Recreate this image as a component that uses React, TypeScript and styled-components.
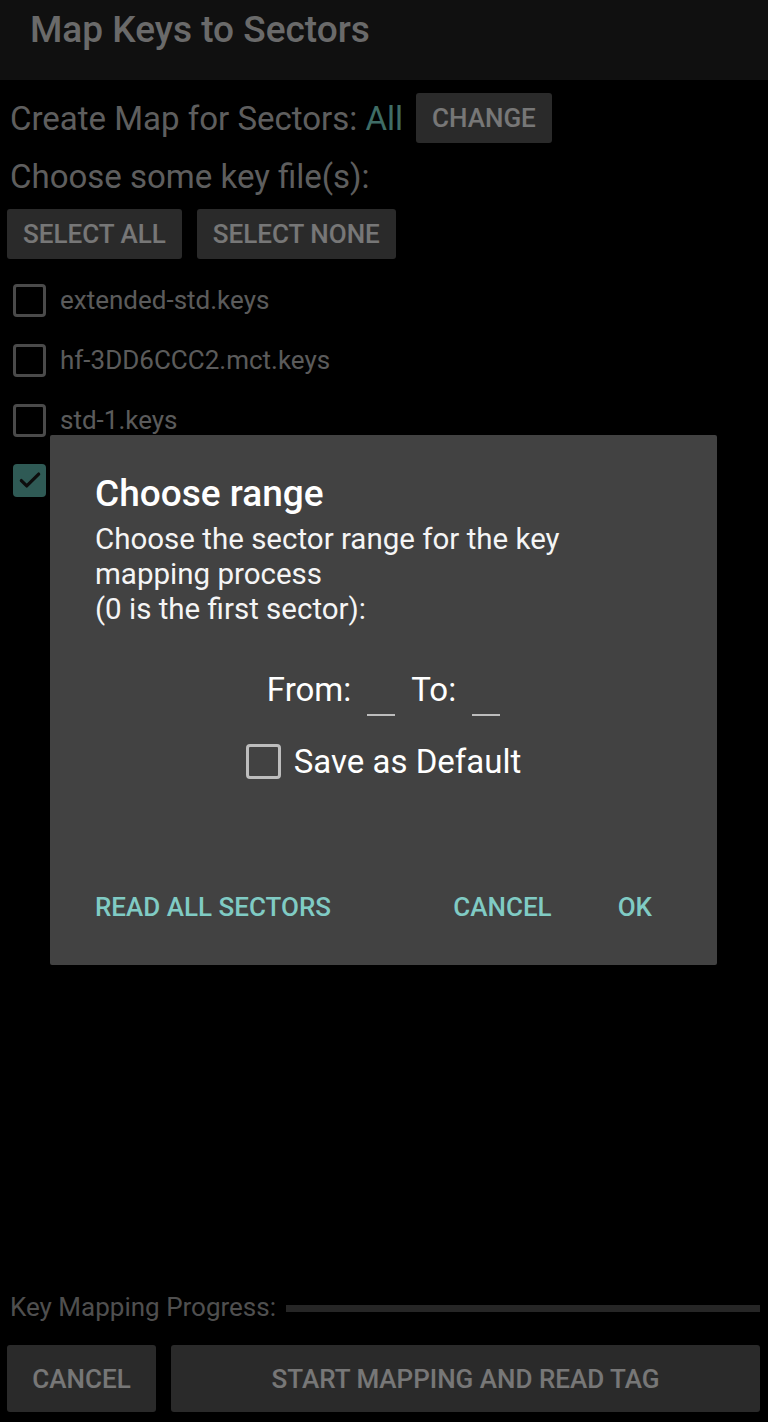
import * as React from "react";
import styled, { createGlobalStyle } from "styled-components";

const Global = createGlobalStyle`
    html, body {
        margin: 0;
        padding: 0;
        background: #000;
    }
    body {
        font-family: Roboto, "Noto Sans", sans-serif;
    }
`;

const Screen = styled.div`
    position: relative;
    width: 768px;
    height: 1422px;
    display: flex;
    flex-direction: column;
    background: #000;
    overflow: hidden;
`;

const TitleBar = styled.div`
    height: 80px;
    box-sizing: border-box;
    padding: 10px 0 0 30px;
    background: #202020;
    color: #d4d4d4;
    font-size: 37px;
    font-weight: 500;
    line-height: 40px;
`;

const Content = styled.div`
    flex: 1;
    display: flex;
    flex-direction: column;
    padding: 13px 8px 10px 7px;
`;

const Line = styled.div<{ h: number }>`
    display: flex;
    align-items: center;
    gap: 13px;
    padding-left: 3px;
    color: #bcbcbc;
    font-size: 33px;
    height: ${({ h }) => h}px;
`;

const Accent = styled.span`
    color: #7edacc;
`;

const Button = styled.div<{ w?: string; h: number; grow?: boolean }>`
    display: flex;
    align-items: center;
    justify-content: center;
    height: ${({ h }) => h}px;
    padding: 0 16px;
    width: ${({ w }) => w || "auto"};
    flex: ${({ grow }) => (grow ? 1 : "none")};
    box-sizing: border-box;
    background: #545454;
    border-radius: 3px;
    color: #eeeeee;
    font-size: 26px;
    font-weight: 500;
    text-transform: uppercase;
`;

const ButtonRow = styled.div`
    display: flex;
    gap: 15px;
`;

const FileList = styled.div`
    display: flex;
    flex-direction: column;
    margin-top: 11px;
`;

const FileRow = styled.div`
    display: flex;
    align-items: center;
    gap: 14px;
    height: 60px;
    padding-left: 6px;
    color: #b6b6b6;
    font-size: 26px;
`;

const Box = styled.div<{ checked?: boolean; size?: number; tone?: string }>`
    width: ${({ size }) => size || 33}px;
    height: ${({ size }) => size || 33}px;
    box-sizing: border-box;
    border-radius: 4px;
    border: ${({ checked, tone }) => (checked ? "none" : `3px solid ${tone || "#949494"}`)};
    background: ${({ checked }) => (checked ? "#5fb5aa" : "transparent")};
    display: flex;
    align-items: center;
    justify-content: center;
`;

const Spacer = styled.div`
    flex: 1;
`;

const Progress = styled.div`
    display: flex;
    align-items: center;
    gap: 10px;
    padding-left: 3px;
    color: #9e9e9e;
    font-size: 26px;
    height: 36px;
`;

const Track = styled.div`
    flex: 1;
    height: 7px;
    background: #4c4c4c;
    margin-top: 2px;
`;

const BottomRow = styled.div`
    display: flex;
    gap: 15px;
    margin-top: 20px;
`;

const Scrim = styled.div`
    position: absolute;
    inset: 0;
    background: rgba(0, 0, 0, 0.5);
`;

const Dialog = styled.div`
    position: absolute;
    left: 50px;
    top: 435px;
    width: 667px;
    height: 530px;
    box-sizing: border-box;
    padding: 34px 45px 34px 45px;
    background: #424242;
    border-radius: 2px;
    display: flex;
    flex-direction: column;
    color: #ffffff;
`;

const DialogTitle = styled.div`
    font-size: 37px;
    font-weight: 500;
    line-height: 50px;
`;

const DialogText = styled.div`
    font-size: 29.5px;
    line-height: 35px;
    margin-top: 3px;
    color: #f5f5f5;
`;

const RangeRow = styled.div`
    display: flex;
    align-items: center;
    justify-content: center;
    gap: 16px;
    margin-top: 37px;
    height: 50px;
    font-size: 33px;
`;

const Field = styled.div`
    width: 28px;
    height: 26px;
    margin-top: 26px;
    border-bottom: 2px solid #bdbdbd;
`;

const SaveRow = styled.div`
    display: flex;
    align-items: center;
    justify-content: center;
    gap: 13px;
    height: 50px;
    margin-top: 22px;
    font-size: 33px;
`;

const Actions = styled.div`
    margin-top: auto;
    display: flex;
    align-items: center;
    justify-content: space-between;
    height: 48px;
    padding-right: 20px;
`;

const ActionGroup = styled.div`
    display: flex;
    gap: 66px;
`;

const Action = styled.div`
    color: #80cbc4;
    font-size: 26px;
    font-weight: 500;
    text-transform: uppercase;
`;

const Check = () => (
    <svg width="26" height="26" viewBox="0 0 24 24">
        <path
            d="M4 12.5l5 5L20 6.5"
            fill="none"
            stroke="#1a1a1a"
            strokeWidth="3"
            strokeLinecap="round"
            strokeLinejoin="round"
        />
    </svg>
);

// the last file row sits under the dialog, only its box shows
const files = [
    { name: "extended-std.keys", checked: false },
    { name: "hf-3DD6CCC2.mct.keys", checked: false },
    { name: "std-1.keys", checked: false },
    { name: "", checked: true },
];

export default function App() {
    return (
        <Screen>
            <Global />
            <TitleBar>Map Keys to Sectors</TitleBar>
            <Content>
                <Line h={50}>
                    <span>
                        Create Map for Sectors: <Accent>All</Accent>
                    </span>
                    <Button h={50}>Change</Button>
                </Line>
                <Line h={66}>Choose some key file(s):</Line>
                <ButtonRow>
                    <Button h={50}>Select All</Button>
                    <Button h={50}>Select None</Button>
                </ButtonRow>
                <FileList>
                    {files.map((f, i) => (
                        <FileRow key={i}>
                            <Box checked={f.checked}>{f.checked && <Check />}</Box>
                            {f.name}
                        </FileRow>
                    ))}
                </FileList>
                <Spacer />
                <Progress>
                    Key Mapping Progress:
                    <Track />
                </Progress>
                <BottomRow>
                    <Button h={67} w="149px">Cancel</Button>
                    <Button h={67} grow>Start Mapping and Read Tag</Button>
                </BottomRow>
            </Content>
            <Scrim />
            <Dialog>
                <DialogTitle>Choose range</DialogTitle>
                <DialogText>
                    Choose the sector range for the key
                    <br />
                    mapping process
                    <br />
                    (0 is the first sector):
                </DialogText>
                <RangeRow>
                    From:
                    <Field />
                    To:
                    <Field />
                </RangeRow>
                <SaveRow>
                    <Box size={35} tone="#bdbdbd" />
                    Save as Default
                </SaveRow>
                <Actions>
                    <Action>Read all sectors</Action>
                    <ActionGroup>
                        <Action>Cancel</Action>
                        <Action>OK</Action>
                    </ActionGroup>
                </Actions>
            </Dialog>
        </Screen>
    );
}
